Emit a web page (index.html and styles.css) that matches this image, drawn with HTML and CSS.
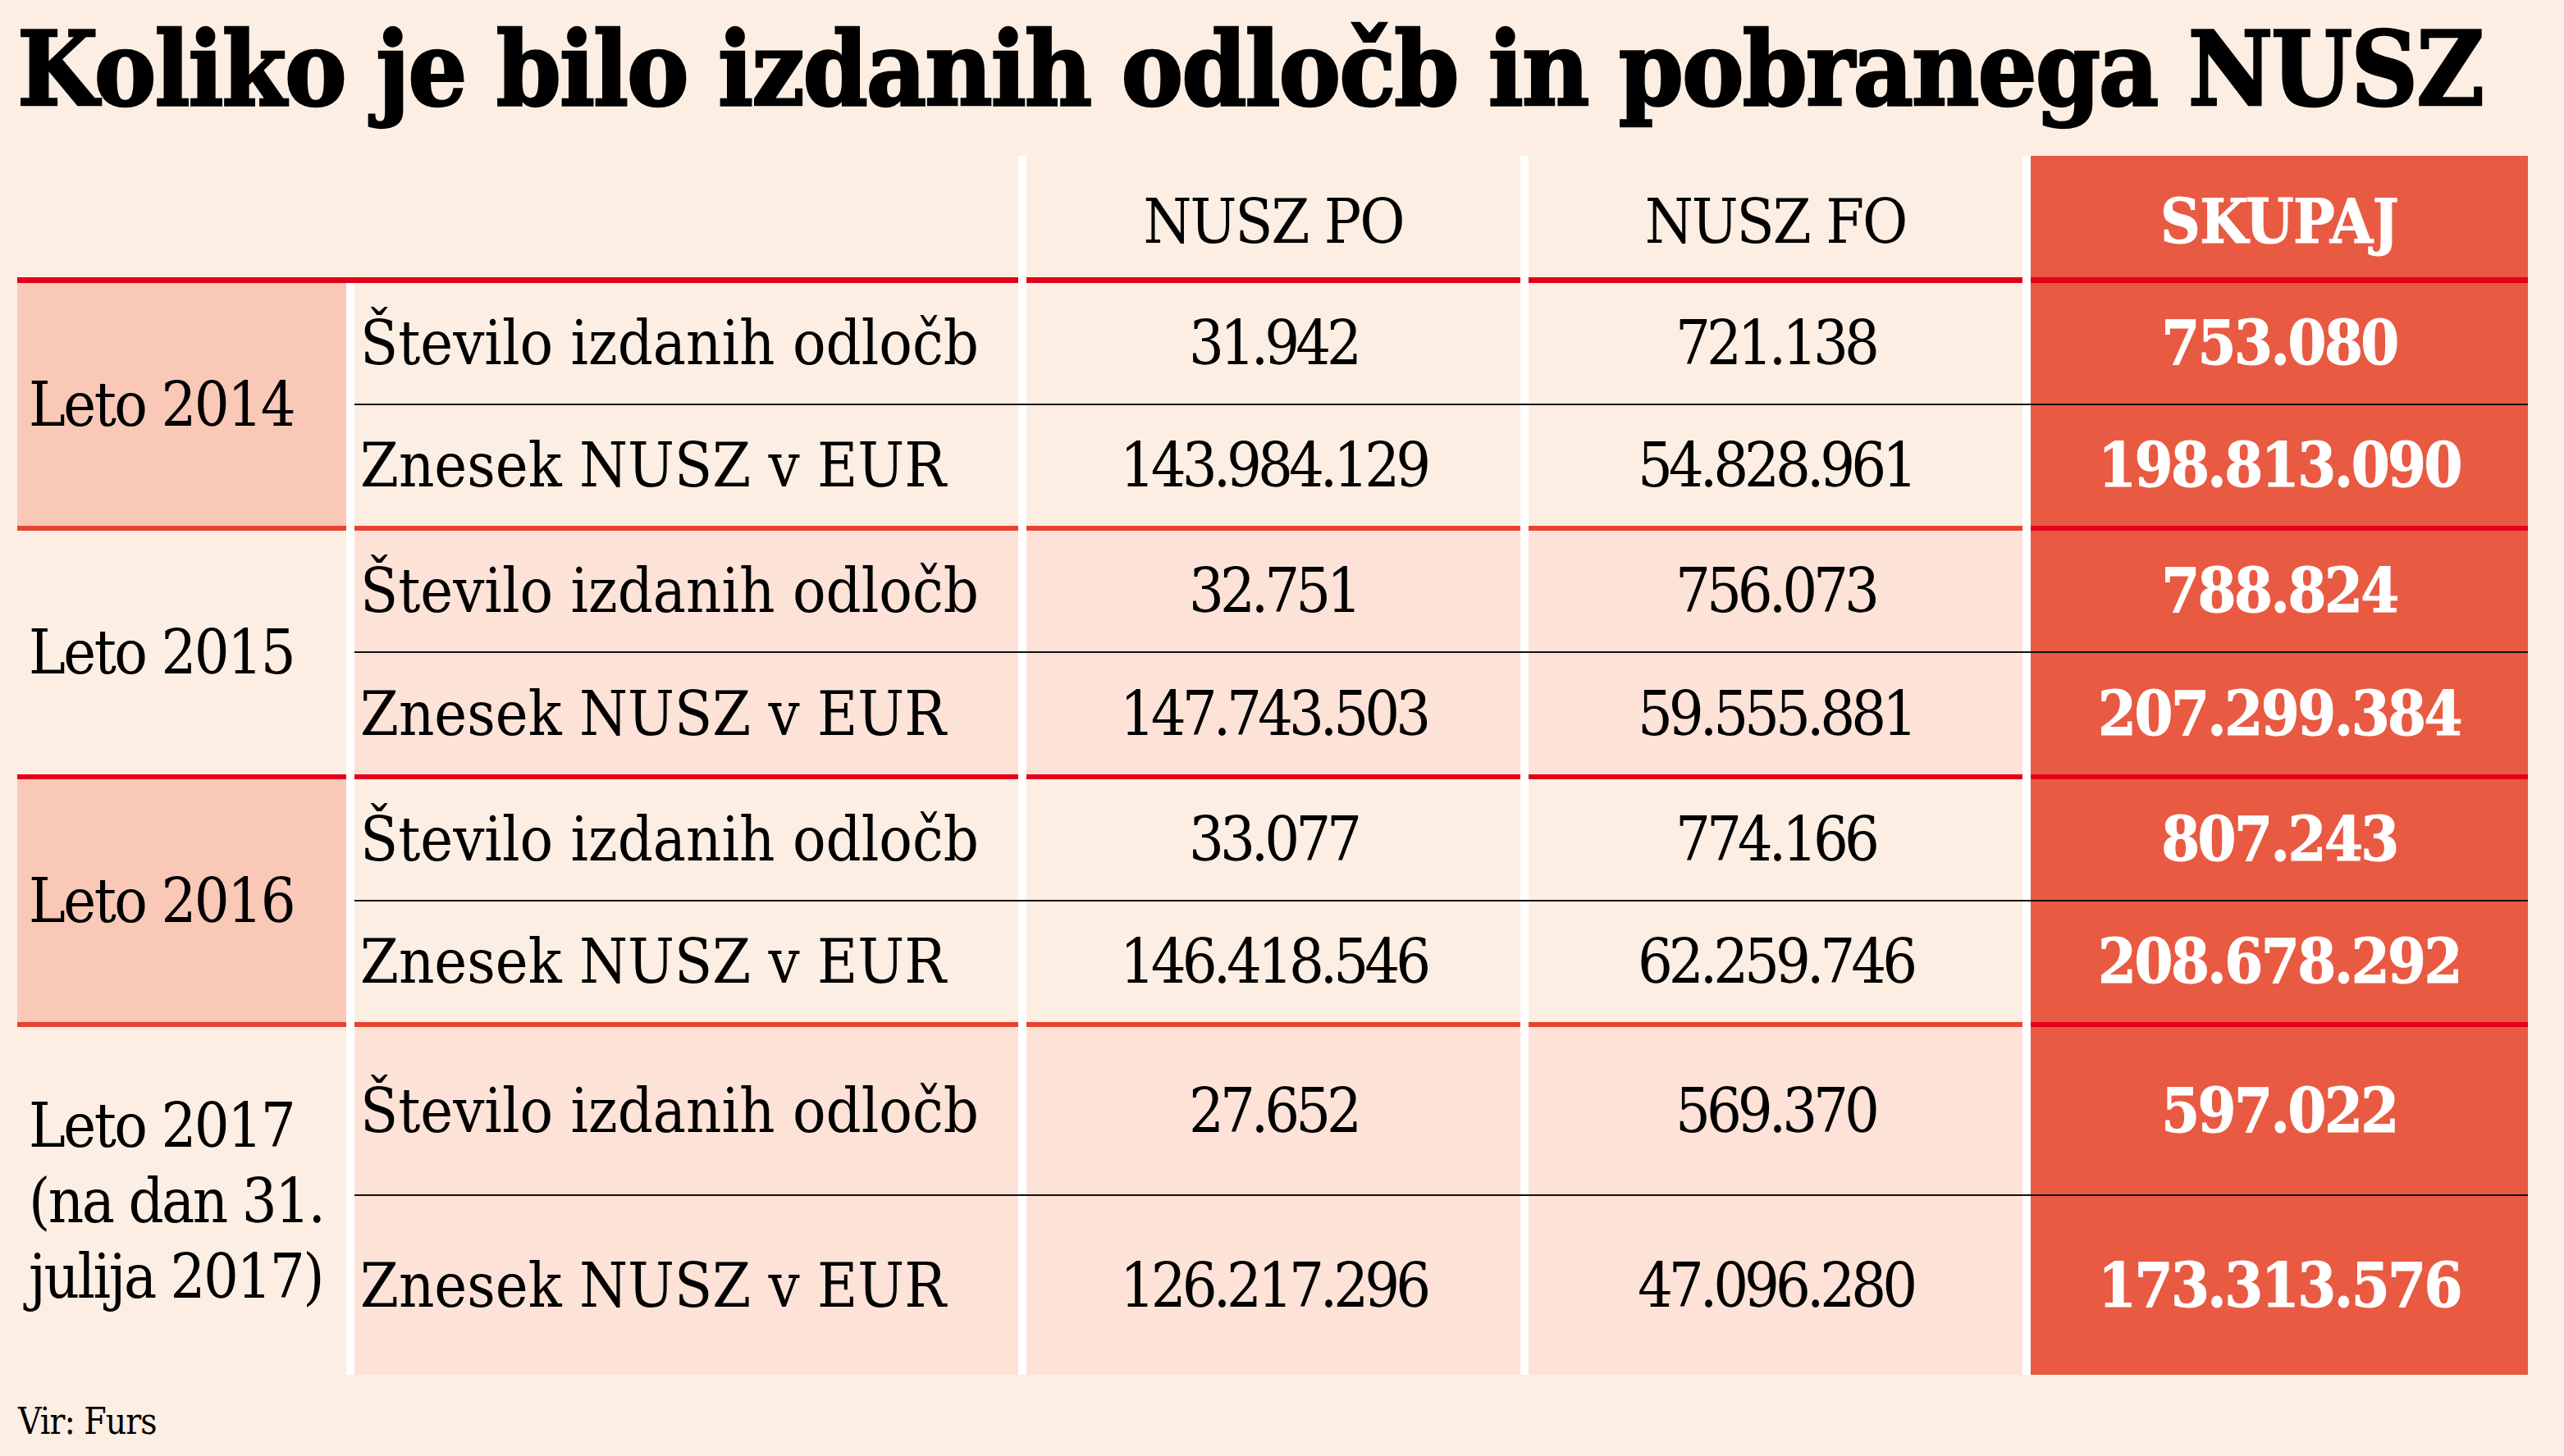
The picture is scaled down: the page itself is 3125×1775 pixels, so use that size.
FILE: index.html
```html
<!DOCTYPE html>
<html lang="sl">
<head>
<meta charset="utf-8">
<title>Koliko je bilo izdanih odločb in pobranega NUSZ</title>
<link rel="stylesheet" href="styles.css">
</head>
<body>
<div class="page">
  <h1 class="title">Koliko je bilo izdanih odločb in pobranega NUSZ</h1>
  <div class="table">
    <div class="c head-blank"></div>
    <div class="c head">NUSZ PO</div>
    <div class="c head">NUSZ FO</div>
    <div class="c head tot">SKUPAJ</div>

    <div class="group g-a">
      <div class="c year">Leto 2014</div>
      <div class="c label">Število izdanih odločb</div>
      <div class="c num">31.942</div>
      <div class="c num">721.138</div>
      <div class="c num tot">753.080</div>
      <div class="rule"></div>
      <div class="c label last">Znesek NUSZ v EUR</div>
      <div class="c num last">143.984.129</div>
      <div class="c num last">54.828.961</div>
      <div class="c num tot last">198.813.090</div>
    </div>

    <div class="group g-b">
      <div class="c year">Leto 2015</div>
      <div class="c label">Število izdanih odločb</div>
      <div class="c num">32.751</div>
      <div class="c num">756.073</div>
      <div class="c num tot">788.824</div>
      <div class="rule"></div>
      <div class="c label last">Znesek NUSZ v EUR</div>
      <div class="c num last">147.743.503</div>
      <div class="c num last">59.555.881</div>
      <div class="c num tot last">207.299.384</div>
    </div>

    <div class="group g-a">
      <div class="c year">Leto 2016</div>
      <div class="c label">Število izdanih odločb</div>
      <div class="c num">33.077</div>
      <div class="c num">774.166</div>
      <div class="c num tot">807.243</div>
      <div class="rule"></div>
      <div class="c label last">Znesek NUSZ v EUR</div>
      <div class="c num last">146.418.546</div>
      <div class="c num last">62.259.746</div>
      <div class="c num tot last">208.678.292</div>
    </div>

    <div class="group g-b g-end">
      <div class="c year multi">Leto 2017<br>(na dan 31.<br>julija 2017)</div>
      <div class="c label">Število izdanih odločb</div>
      <div class="c num">27.652</div>
      <div class="c num">569.370</div>
      <div class="c num tot">597.022</div>
      <div class="rule"></div>
      <div class="c label last">Znesek NUSZ v EUR</div>
      <div class="c num last">126.217.296</div>
      <div class="c num last">47.096.280</div>
      <div class="c num tot last">173.313.576</div>
    </div>
  </div>
  <div class="source">Vir: Furs</div>
</div>
</body>
</html>
```

FILE: styles.css
```css
html, body {
  margin: 0;
  background: #fceee2;
}

body {
  font-family: "DejaVu Serif Condensed", "DejaVu Serif", serif;
  font-stretch: condensed;
  color: #000;
}

.page {
  padding: 21px 0 0 21px;
}

.title {
  margin: 0 0 43px 0;
  font-size: 126px;
  line-height: 126px;
  font-weight: bold;
  letter-spacing: -2px;
  -webkit-text-stroke: 2.5px #000;
  white-space: nowrap;
}

.table {
  display: grid;
  width: max-content;
  grid-template-columns: 401px 809px 602px 602px 606px;
  grid-template-rows: 155px 147px 2px 153px 147px 2px 154px 147px 2px 153px 204px 2px 218px;
  column-gap: 10px;
  background: #ffffff;
}

.group {
  display: contents;
  --sep: #e84330;
  --year-bg: #f9c8b6;
  --row-bg: #fceee2;
}

.group.g-b {
  --sep: #e2001a;
  --year-bg: #fceee2;
  --row-bg: #fde2d7;
}

.c {
  box-sizing: border-box;
  display: flex;
  align-items: center;
  background: var(--row-bg, #fceee2);
  font-size: 75px;
  line-height: 1;
  white-space: nowrap;
}

.head-blank {
  grid-column: span 2;
  background: #fceee2;
  border-bottom: 7px solid #e2001a;
}

.head {
  justify-content: center;
  padding-top: 12px;
  background: #fceee2;
  border-bottom: 7px solid #e2001a;
  letter-spacing: -2px;
}

.year {
  grid-row: span 3;
  padding-left: 14px;
  background: var(--year-bg);
  border-bottom: 6px solid var(--sep);
  letter-spacing: -2.5px;
}

.year.multi {
  line-height: 92px;
  white-space: normal;
}

.label {
  padding-left: 7px;
}

.num {
  justify-content: center;
  letter-spacing: -5px;
}

.last {
  border-bottom: 6px solid var(--sep);
}

.g-end .last,
.g-end .year {
  border-bottom: 0;
}

.tot {
  background: #e85a42;
  color: #ffffff;
  font-weight: bold;
  letter-spacing: -2.5px;
  -webkit-text-stroke: 1px #ffffff;
}

.head.tot {
  letter-spacing: -0.5px;
}

.tot.last,
.head.tot {
  border-bottom-color: #e2001a;
}

.g-end .tot.last {
  border-bottom: 0;
}

.rule {
  grid-column: 2 / -1;
  background: #111111;
}

.source {
  margin: 35px 0 0 1px;
  font-size: 44px;
  line-height: 1;
  letter-spacing: -1px;
}
```
